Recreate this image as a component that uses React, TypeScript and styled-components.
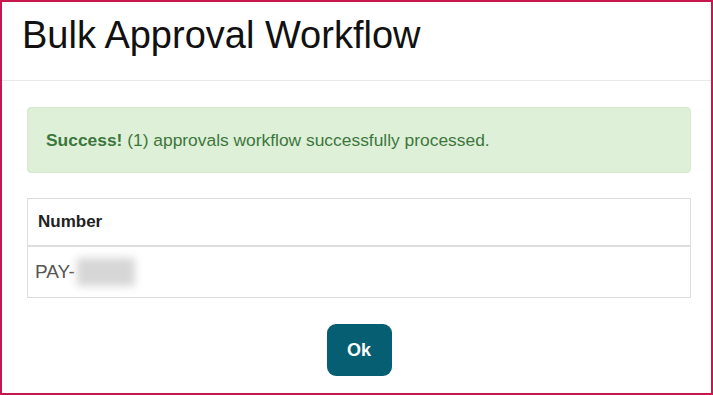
import React from "react";
import styled, { createGlobalStyle } from "styled-components";

const Global = createGlobalStyle`
  html, body { margin: 0; padding: 0; background: #ffffff; }
  * { box-sizing: border-box; }
`;

const Frame = styled.div`
  width: 713px;
  height: 395px;
  border: 2px solid #c8174f;
  background: #ffffff;
  display: flex;
  flex-direction: column;
  font-family: "Liberation Sans", Arial, sans-serif;
`;

const Header = styled.header`
  height: 79px;
  padding: 11px 20px 0 20px;
  border-bottom: 1px solid #e8e8e8;
`;

const Title = styled.h1`
  margin: 0;
  font-size: 38px;
  line-height: 44px;
  font-weight: 400;
  color: #111111;
`;

const Body = styled.main`
  padding: 26px 20px 0 25px;
  display: flex;
  flex-direction: column;
  gap: 25px;
`;

const Alert = styled.div`
  height: 66px;
  border: 1px solid #d6e9c6;
  border-radius: 4px;
  background: #dff0d8;
  color: #3c763d;
  font-size: 17.4px;
  display: flex;
  align-items: center;
  padding-left: 18px;
`;

const Strong = styled.strong`
  font-weight: 700;
`;

const Table = styled.div`
  border: 1px solid #dddddd;
  display: flex;
  flex-direction: column;
`;

const HeadRow = styled.div`
  height: 48px;
  border-bottom: 2px solid #dddddd;
  display: flex;
  align-items: center;
  padding-left: 10px;
  font-size: 17px;
  font-weight: 700;
  color: #222222;
`;

const Row = styled.div`
  height: 50px;
  display: flex;
  align-items: center;
  padding-left: 7px;
  font-size: 19px;
  color: #555555;
`;

const Redacted = styled.span`
  display: inline-block;
  width: 58px;
  height: 28px;
  margin-left: 2px;
  background: #d6d6d6;
  filter: blur(4px);
`;

const Footer = styled.div`
  display: flex;
  justify-content: center;
`;

const OkButton = styled.button`
  width: 65px;
  height: 52px;
  margin-top: 1px;
  border: none;
  border-radius: 9px;
  background: #065e73;
  color: #ffffff;
  font-family: "Liberation Sans", Arial, sans-serif;
  font-size: 18px;
  font-weight: 700;
  cursor: pointer;
`;

export default function App() {
  return (
    <>
      <Global />
      <Frame>
        <Header>
          <Title>Bulk Approval Workflow</Title>
        </Header>
        <Body>
          <Alert>
            <span>
              <Strong>Success!</Strong> (1) approvals workflow successfully processed.
            </span>
          </Alert>
          <Table>
            <HeadRow>Number</HeadRow>
            <Row>
              PAY-<Redacted />
            </Row>
          </Table>
          <Footer>
            <OkButton>Ok</OkButton>
          </Footer>
        </Body>
      </Frame>
    </>
  );
}
